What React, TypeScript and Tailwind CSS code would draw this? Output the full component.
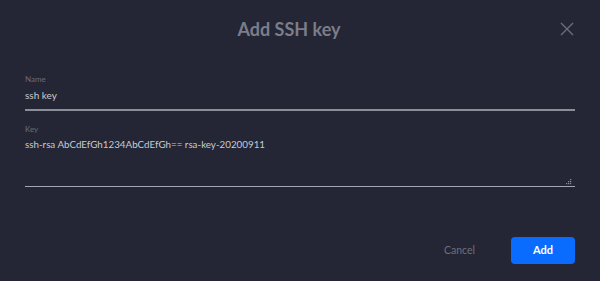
export default function App() {
  return (
    <div
      className="relative flex h-[281px] w-[600px] flex-col bg-[#242635] px-[25px]"
      style={{ fontFamily: "Lato, 'Open Sans', sans-serif" }}
    >
      {/* Header */}
      <div className="flex h-[58px] items-center justify-center pr-[22px]">
        <h1 className="text-[18px] font-bold text-[#7b7d8a]">Add SSH key</h1>
        <button className="absolute right-[26px] top-[22px] text-[#6d6f7c]">
          <svg width="14" height="14" viewBox="0 0 14 14" fill="none" stroke="currentColor" strokeWidth="1.3">
            <path d="M1 1L13 13M13 1L1 13" />
          </svg>
        </button>
      </div>

      {/* Name field */}
      <div className="mt-[16px] flex flex-col">
        <label className="text-[8px] leading-[10px] text-[#6a6c79]">Name</label>
        <div className="mt-[4px] text-[10px] leading-[14px] text-[#c9cad2]">ssh key</div>
        <div className="mt-[7px] h-[2px] w-full bg-[#8b8d98]" />
      </div>

      {/* Key field */}
      <div className="mt-[13px] flex flex-col">
        <label className="text-[8px] leading-[10px] text-[#6a6c79]">Key</label>
        <div className="relative mt-[3px] h-[49px] text-[9.8px] leading-[14px] text-[#c9cad2]">
          ssh-rsa AbCdEfGh1234AbCdEfGh== rsa-key-20200911
          <svg
            className="absolute bottom-[1px] right-[3px]"
            width="6"
            height="6"
            viewBox="0 0 6 6"
            fill="#8b8d98"
          >
            <rect x="4" y="0" width="1.2" height="1.2" />
            <rect x="2" y="2" width="1.2" height="1.2" />
            <rect x="4" y="2" width="1.2" height="1.2" />
            <rect x="0" y="4" width="1.2" height="1.2" />
            <rect x="2" y="4" width="1.2" height="1.2" />
            <rect x="4" y="4" width="1.2" height="1.2" />
          </svg>
        </div>
        <div className="h-[1px] w-full bg-[#a4a6b0]" />
      </div>

      {/* Footer */}
      <div className="mt-[50px] flex items-center justify-end gap-[36px]">
        <button className="text-[10.5px] text-[#6d6f7c]">Cancel</button>
        <button className="h-[27px] w-[64px] rounded-[4px] bg-[#0a6cff] text-[11px] font-bold text-white">
          Add
        </button>
      </div>
    </div>
  );
}
